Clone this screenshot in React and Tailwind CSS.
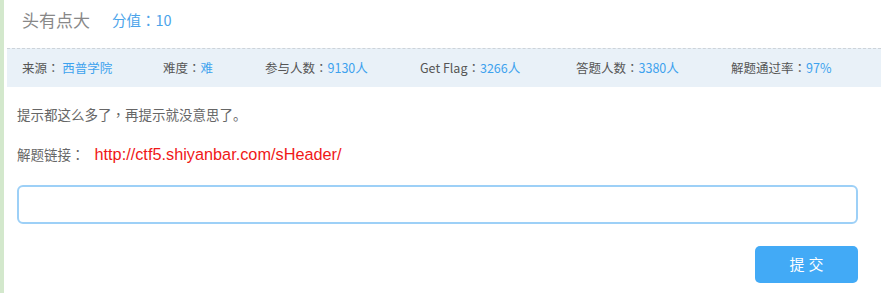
import React from "react";

const font = { fontFamily: '"Noto Sans CJK SC", "Noto Sans", sans-serif' };

function C() {
  return <span style={{ fontFamily: '"Noto Sans CJK TC", sans-serif' }}>：</span>;
}

function Stat({ label, value, w, sp }) {
  return (
    <div className={`shrink-0 whitespace-nowrap ${w}`}>
      <span className="text-[#555]">{label}<C />{sp ? " " : ""}</span>
      <span className="text-[#3da2ee]">{value}</span>
    </div>
  );
}

export default function App() {
  return (
    <div className="w-[881px] h-[293px] bg-white flex overflow-hidden" style={font}>
      <div className="w-[4px] h-full bg-[#d3e8cc] shrink-0" />
      <div className="ml-[3px] flex-1 flex flex-col">
        <div className="pt-[8px] pl-[15px] h-[32px] flex items-center gap-[22px] leading-[24px]">
          <span className="text-[17px] text-[#888]">头有点大</span>
          <span className="text-[14.5px] text-[#4ca4ea]">分值<C />10</span>
        </div>
        <div className="mt-[16px] h-[39px] bg-[#e9f1f8] border-t border-dashed border-[#cdd3d9] flex items-center pl-[15px] text-[12.5px]">
          <Stat label="来源" value="西普学院" w="w-[141px]" sp />
          <Stat label="难度" value="难" w="w-[102px]" />
          <Stat label="参与人数" value="9130人" w="w-[155px]" />
          <Stat label="Get Flag" value="3266人" w="w-[156px]" />
          <Stat label="答题人数" value="3380人" w="w-[155px]" />
          <Stat label="解题通过率" value="97%" w="w-[120px]" />
        </div>
        <div className="pl-[10px] pr-[23px] flex flex-col">
          <div className="mt-[17px] leading-[20px] text-[13.5px] text-[#666]">
            提示都这么多了<span style={{ fontFamily: '"Noto Sans CJK TC", sans-serif' }}>，</span>再提示就没意思了。
          </div>
          <div className="mt-[20px] h-[20px] flex items-center text-[13.5px] text-[#666] whitespace-nowrap">
            <span>解题链接<C /></span>
            <span
              className="ml-[10px] text-[16.3px] leading-[20px] text-[#f01818]"
              style={{ fontFamily: '"Liberation Sans", Arial, sans-serif' }}
            >
              http://ctf5.shiyanbar.com/sHeader/
            </span>
          </div>
          <input
            className="mt-[21px] h-[39px] w-full rounded-[6px] border-[2px] border-[#9dd0f7] outline-none px-3 text-sm"
            type="text"
          />
          <button className="mt-[22px] self-end w-[103px] h-[37px] rounded-[5px] bg-[#42aaf6] text-white text-[15px] tracking-[4px] pl-[4px]">
            提交
          </button>
        </div>
      </div>
    </div>
  );
}
